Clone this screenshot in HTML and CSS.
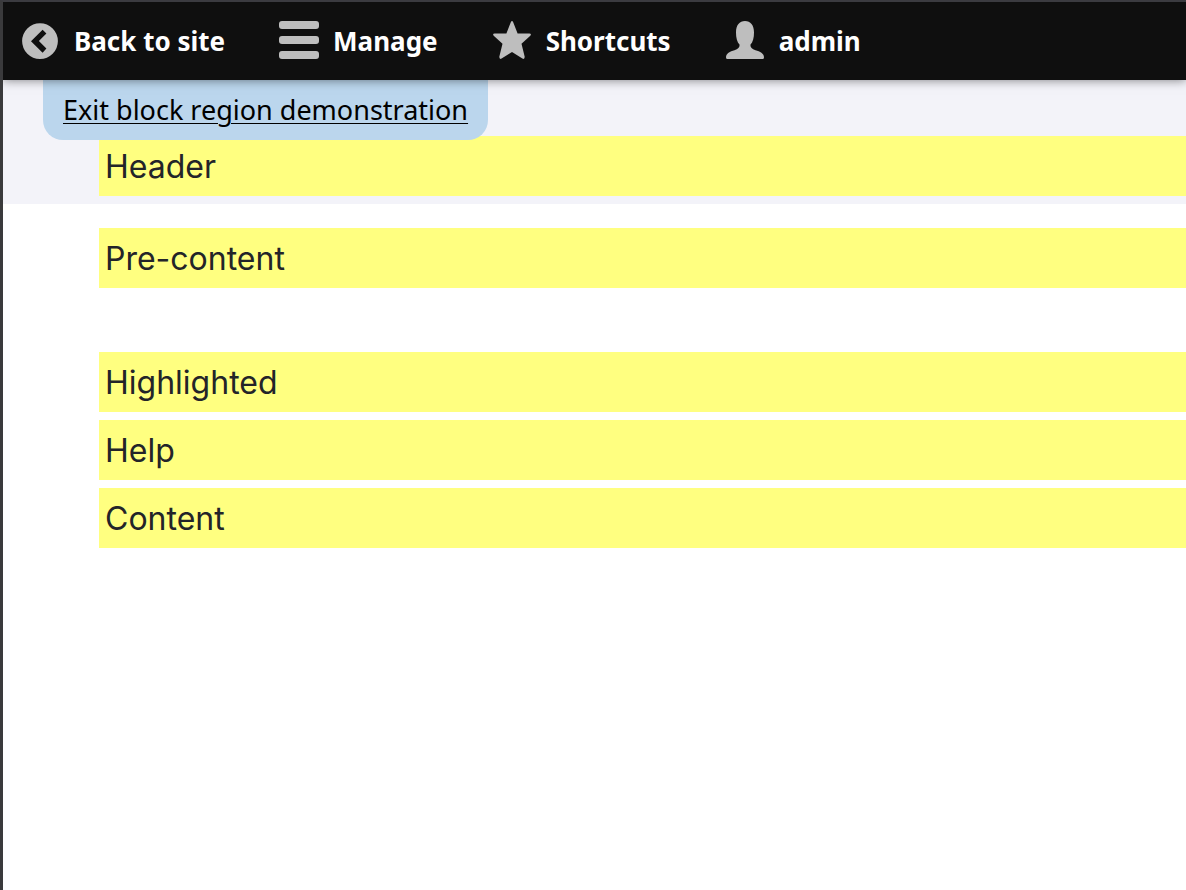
FILE: index.html
```html
<!DOCTYPE html>
<html lang="en">
<head>
<meta charset="utf-8">
<title>Block region demonstration</title>
<link rel="stylesheet" href="styles.css">
</head>
<body>
<nav class="toolbar" aria-label="Toolbar">
	<a class="toolbar-item" href="#">
		<svg class="icon" viewBox="0 0 40 40" aria-hidden="true">
			<path fill-rule="evenodd" d="M20 2.2a17.9 17.9 0 1 0 0 35.8a17.9 17.9 0 0 0 0-35.8zM22.6 8.8L26.4 12.4L18.9 20L26.4 27.6L22.6 31.8L11 20.2z"/>
		</svg>
		Back to site
	</a>
	<a class="toolbar-item" href="#">
		<svg class="icon" viewBox="0 0 40 40" aria-hidden="true">
			<rect y="0" width="40" height="8" rx="3"/>
			<rect y="15" width="40" height="8" rx="3"/>
			<rect y="30" width="40" height="8" rx="3"/>
		</svg>
		Manage
	</a>
	<a class="toolbar-item" href="#">
		<svg class="icon" viewBox="0 0 40 40" aria-hidden="true">
			<path d="M18.8 1.2Q20 -1.2 21.2 1.2L25.6 12.4H37.3Q39.9 12.7 38.3 14.8L29.5 22.7L32.7 35.8Q32.7 38.7 30.4 37.6L20 31.1L9.6 37.6Q7.3 38.7 7.3 35.8L10.5 22.7L1.7 14.8Q.1 12.7 2.7 12.4H14.4z"/>
		</svg>
		Shortcuts
	</a>
	<a class="toolbar-item" href="#">
		<svg class="icon" viewBox="0 0 40 40" aria-hidden="true">
			<path d="M1 36.5C1 32.5 5 30.6 9.5 29.3C13 28.3 14.8 26.4 14.6 23.8C12 21 11 16.5 11 11.5C11 4 14.5 0 20 0S29 4 29 11.5C29 16.5 28 21 25.4 23.8C25.2 26.4 27 28.3 30.5 29.3C35 30.6 39 32.5 39 36.5Q39 38 37.5 38H2.5Q1 38 1 36.5z"/>
		</svg>
		admin
	</a>
</nav>
<div class="page">
	<a class="demo-backlink" href="#">Exit block region demonstration</a>
	<header class="site-header">
		<div class="block-region">Header</div>
	</header>
	<main class="site-main">
		<div class="pre-content">
			<div class="block-region">Pre-content</div>
		</div>
		<div class="block-region">Highlighted</div>
		<div class="block-region">Help</div>
		<div class="block-region">Content</div>
	</main>
</div>
</body>
</html>
```
FILE: styles.css
```css
* {
	box-sizing: border-box;
}
body {
	margin: 0;
	min-height: 100vh;
	border-top: 2px solid #3b3b40;
	border-left: 3px solid #3a3a3c;
	background: #fff;
	color: #232429;
	font: 32px/40px Inter, "Liberation Sans", sans-serif;
}

/* toolbar */
.toolbar {
	position: relative;
	z-index: 2;
	display: flex;
	align-items: center;
	gap: 54px;
	height: 78px;
	padding: 0 17px;
	background: #0f0f0f;
	box-shadow: 0 0 10px rgba(0, 0, 0, 0.5);
	font: bold 26px/40px "Noto Sans", "Open Sans", sans-serif;
}
.toolbar-item {
	display: flex;
	align-items: center;
	gap: 14px;
	color: #fff;
	text-decoration: none;
	white-space: nowrap;
}
.icon {
	width: 40px;
	height: 40px;
	fill: #bebebe;
}

/* region demo */
.page {
	position: relative;
}
.demo-backlink {
	position: absolute;
	top: 0;
	left: 40px;
	z-index: 1;
	padding: 10px 20px;
	border-radius: 0 0 20px 20px;
	background: #bbd6ed;
	color: #000;
	font: 27px/40px "Noto Sans", "Open Sans", sans-serif;
	text-decoration-thickness: 1px;
	text-underline-offset: 3px;
	white-space: nowrap;
}
.site-header {
	padding: 56px 0 8px 96px;
	background: #f3f3f9;
}
.site-main {
	padding: 24px 0 24px 96px;
}
.pre-content {
	margin-bottom: 64px;
}
.block-region {
	padding: 11px 6px 9px;
	background: #ffff80;
}
.block-region + .block-region {
	margin-top: 8px;
}
```
